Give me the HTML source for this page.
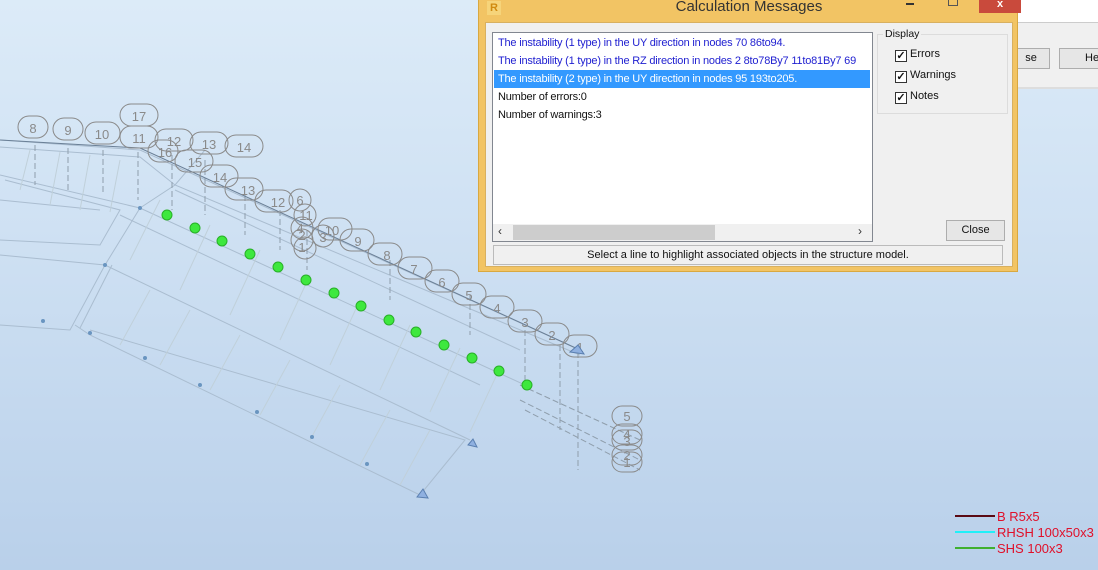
<!DOCTYPE html>
<html><head><meta charset="utf-8"><style>
*{margin:0;padding:0;box-sizing:border-box}
body{width:1098px;height:570px;overflow:hidden;position:relative;font-family:"Liberation Sans",sans-serif;background:linear-gradient(180deg,#dcebf8 0%,#cfe1f3 40%,#b9d0ea 100%)}
.abs{position:absolute}
.dlg{left:478px;top:-3px;width:540px;height:275px;background:#f2c464;border:1px solid #d9a840}
.title{left:0;top:0;width:540px;text-align:center;font-size:15px;color:#333}
.client{left:6px;top:24px;width:528px;height:245px;background:#f0f0f0;border:1px solid #d8b060}
.list{left:6px;top:9px;width:381px;height:210px;background:#fff;border:1px solid #828790}
.row{position:absolute;left:1px;width:376px;height:18px;font-size:11px;line-height:18px;padding-left:4px;white-space:nowrap;overflow:hidden;color:#111;letter-spacing:-0.2px}
.blue{color:#1e1ed0}
.sel{background:#3399ff;color:#fff}
.grp{left:391px;top:11px;width:131px;height:80px;border:1px solid #dcdcdc}
.cb{position:absolute;left:17px;font-size:11px;color:#111}
.cb i{display:inline-block;width:12px;height:12px;border:1px solid #333;background:#fff;vertical-align:-2px;margin-right:3px;font-style:normal;font-size:11px;line-height:10px;text-align:center;font-weight:bold}
.btn{background:#e6e6e6;border:1px solid #adadad;font-size:11px;text-align:center;color:#111}
</style></head><body>
<svg class="abs" style="left:0;top:0" width="1098" height="570">
<g fill="none" stroke="#aabdd0" stroke-width="1">
<path d="M0 140 L140 150 L580 350"/>
<path d="M0 147 L140 157 L175 185 L580 355"/>
<path d="M0 175 L140 208 L525 385"/>
<path d="M5 180 L120 210 L100 245 L0 240"/>
<path d="M0 255 L105 265 L470 440"/>
<path d="M140 208 L105 265 L70 330 L0 325"/>
<path d="M75 325 L90 335 L420 495"/>
<path d="M90 330 L465 440 L420 495"/>
<path d="M112 265 L80 328"/>
<path d="M0 200 L100 210"/>
<path d="M140 208 L175 185 L205 150"/>
<path d="M175 190 L520 350"/>
<path d="M120 215 L480 385"/>
</g>
<g stroke="#c0d0da" stroke-width="1" fill="none">
<path d="M30 150 L20 190M60 152L50 205M90 155L80 210M120 160L110 212M160 200L130 260M210 225L180 290M260 250L230 315M310 275L280 340M360 300L330 365M410 325L380 390M460 348L430 412M500 368L470 432M150 290L120 345M190 310L160 365M240 335L210 390M290 360L260 415M340 385L310 440M390 410L360 465M430 430L400 485"/>
</g>
<g stroke="#8f9eac" stroke-dasharray="6 3" fill="none">
<path d="M35 145V185M68 148V190M103 150V195M138 152V200M172 155V210M205 160V215M245 195V235M280 210V250M307 230V270M390 260V300M470 295V335M525 330V380M560 345V430M578 352V470M520 385L640 440M520 400L640 460M525 410L640 470"/>
</g>
<path d="M0 140 L140 148 L580 350" stroke="#6a7f96" stroke-width="1" fill="none"/>
<g fill="#6a95c0">
<circle cx="43" cy="321" r="2"/><circle cx="90" cy="333" r="2"/><circle cx="145" cy="358" r="2"/><circle cx="200" cy="385" r="2"/><circle cx="257" cy="412" r="2"/><circle cx="312" cy="437" r="2"/><circle cx="367" cy="464" r="2"/><circle cx="105" cy="265" r="2"/><circle cx="140" cy="208" r="2"/>
</g>
<g fill="#3ee83e" stroke="#28b028">
<circle cx="167" cy="215" r="5"/><circle cx="195" cy="228" r="5"/><circle cx="222" cy="241" r="5"/><circle cx="250" cy="254" r="5"/><circle cx="278" cy="267" r="5"/><circle cx="306" cy="280" r="5"/><circle cx="334" cy="293" r="5"/><circle cx="361" cy="306" r="5"/><circle cx="389" cy="320" r="5"/><circle cx="416" cy="332" r="5"/><circle cx="444" cy="345" r="5"/><circle cx="472" cy="358" r="5"/><circle cx="499" cy="371" r="5"/><circle cx="527" cy="385" r="5"/>
</g>
<g fill="none" stroke="#8a8a8a" font-family="Liberation Sans" font-size="13">
<rect x="18" y="116" width="30" height="22" rx="11"/><rect x="53" y="118" width="30" height="22" rx="11"/><rect x="85" y="122" width="35" height="22" rx="11"/><rect x="120" y="104" width="38" height="22" rx="11"/><rect x="120" y="126" width="38" height="22" rx="11"/><rect x="155" y="129" width="38" height="22" rx="11"/><rect x="190" y="132" width="38" height="22" rx="11"/><rect x="225" y="135" width="38" height="22" rx="11"/><rect x="148" y="140" width="30" height="22" rx="11"/><rect x="175" y="150" width="38" height="22" rx="11"/><rect x="200" y="165" width="38" height="22" rx="11"/><rect x="225" y="178" width="38" height="22" rx="11"/><rect x="255" y="190" width="38" height="22" rx="11"/><circle cx="300" cy="200" r="11"/><circle cx="305" cy="215" r="11"/><circle cx="302" cy="228" r="11"/><circle cx="302" cy="240" r="11"/><circle cx="305" cy="248" r="11"/><circle cx="323" cy="236" r="11"/><rect x="318" y="218" width="34" height="22" rx="11"/><rect x="340" y="229" width="34" height="22" rx="11"/><rect x="368" y="243" width="34" height="22" rx="11"/><rect x="398" y="257" width="34" height="22" rx="11"/><rect x="425" y="270" width="34" height="22" rx="11"/><rect x="452" y="283" width="34" height="22" rx="11"/><rect x="480" y="296" width="34" height="22" rx="11"/><rect x="508" y="310" width="34" height="22" rx="11"/><rect x="535" y="323" width="34" height="22" rx="11"/><rect x="563" y="335" width="34" height="22" rx="11"/><rect x="612" y="406" width="30" height="20" rx="10"/><rect x="612" y="424" width="30" height="20" rx="10"/><rect x="612" y="430" width="30" height="20" rx="10"/><rect x="612" y="445" width="30" height="20" rx="10"/><rect x="612" y="452" width="30" height="20" rx="10"/>
<g fill="#8a8a8a" stroke="none" text-anchor="middle">
<text x="33" y="133">8</text><text x="68" y="135">9</text><text x="102" y="139">10</text><text x="139" y="121">17</text><text x="139" y="143">11</text><text x="174" y="146">12</text><text x="209" y="149">13</text><text x="244" y="152">14</text><text x="165" y="157">16</text><text x="195" y="167">15</text><text x="220" y="182">14</text><text x="248" y="195">13</text><text x="278" y="207">12</text><text x="300" y="205">6</text><text x="306" y="220">11</text><text x="300" y="233">4</text><text x="302" y="240">2</text><text x="302" y="252">1</text><text x="323" y="242">3</text><text x="332" y="235">10</text><text x="358" y="246">9</text><text x="387" y="260">8</text><text x="414" y="274">7</text><text x="442" y="287">6</text><text x="469" y="300">5</text><text x="497" y="313">4</text><text x="525" y="327">3</text><text x="552" y="340">2</text><text x="580" y="352">1</text><text x="627" y="421">5</text><text x="627" y="439">4</text><text x="627" y="446">3</text><text x="627" y="460">2</text><text x="627" y="467">1</text>
</g></g>
<path d="M570 352 L578 345 L584 354 Z" fill="#8fb0e0" stroke="#5a7fb0"/>
<path d="M468 445 L473 439 L477 447 Z" fill="#8fb0e0" stroke="#5a7fb0"/>
<path d="M417 497 L423 489 L428 498 Z" fill="#8fb0e0" stroke="#5a7fb0"/>
<g font-family="Liberation Sans" font-size="13" fill="#e0102a">
<line x1="955" y1="516" x2="995" y2="516" stroke="#5a0a14" stroke-width="2"/><text x="997" y="521">B R5x5</text>
<line x1="955" y1="532" x2="995" y2="532" stroke="#20f0f8" stroke-width="2"/><text x="997" y="537">RHSH 100x50x3</text>
<line x1="955" y1="548" x2="995" y2="548" stroke="#40b030" stroke-width="2"/><text x="997" y="553">SHS 100x3</text>
</g>
</svg>
<div class="abs" style="left:1018px;top:0;width:80px;height:22px;background:#fff"></div>
<div class="abs" style="left:1018px;top:22px;width:80px;height:67px;background:#f0f0f0;border-top:1px solid #ccc;border-bottom:2px solid #ddd"></div>
<div class="abs btn" style="left:990px;top:48px;width:60px;height:21px;line-height:19px;padding-left:22px">se</div>
<div class="abs btn" style="left:1059px;top:48px;width:50px;height:21px;line-height:19px;text-align:left;padding-left:25px">He</div>
<div class="abs dlg">
 <div class="abs" style="left:8px;top:3px;width:14px;height:14px;background:#f6d47a;color:#d08a10;font-size:11px;font-weight:bold;text-align:center;line-height:14px">R</div>
 <div class="abs title">Calculation Messages</div>
 <div class="abs" style="left:427px;top:5px;width:8px;height:2px;background:#333"></div>
 <div class="abs" style="left:469px;top:-2px;width:10px;height:10px;border:1px solid #555"></div>
 <div class="abs" style="left:500px;top:0;width:42px;height:15px;background:#c94a3c;color:#fff;font-size:11px;text-align:center;line-height:13px;font-weight:bold">x</div>
 <div class="abs client">
  <div class="abs list">
   <div class="row blue" style="top:1px">The instability (1 type) in the UY direction in nodes 70 86to94.</div>
   <div class="row blue" style="top:19px">The instability (1 type) in the RZ direction in nodes 2 8to78By7 11to81By7 69</div>
   <div class="row sel" style="top:37px">The instability (2 type) in the UY direction in nodes 95 193to205.</div>
   <div class="row" style="top:55px">Number of errors:0</div>
   <div class="row" style="top:73px">Number of warnings:3</div>
   <div class="abs" style="left:0;top:191px;width:379px;height:17px;background:#f0f0f0"></div>
   <div class="abs" style="left:20px;top:192px;width:202px;height:15px;background:#cdcdcd"></div>
   <div class="abs" style="left:5px;top:191px;font-size:12px;color:#333">&lsaquo;</div>
   <div class="abs" style="left:365px;top:191px;font-size:12px;color:#333">&rsaquo;</div>
  </div>
  <div class="abs grp">
   <div class="abs" style="left:5px;top:-7px;background:#f0f0f0;font-size:10.5px;padding:0 2px;color:#111">Display</div>
   <div class="cb" style="top:13px"><i>✓</i>Errors</div>
   <div class="cb" style="top:34px"><i>✓</i>Warnings</div>
   <div class="cb" style="top:55px"><i>✓</i>Notes</div>
  </div>
  <div class="abs btn" style="left:460px;top:197px;width:59px;height:21px;line-height:19px">Close</div>
  <div class="abs" style="left:7px;top:222px;width:510px;height:20px;border:1px solid #bbb;font-size:11px;text-align:center;line-height:18px;color:#111">Select a line to highlight associated objects in the structure model.</div>
 </div>
</div>
</body></html>
